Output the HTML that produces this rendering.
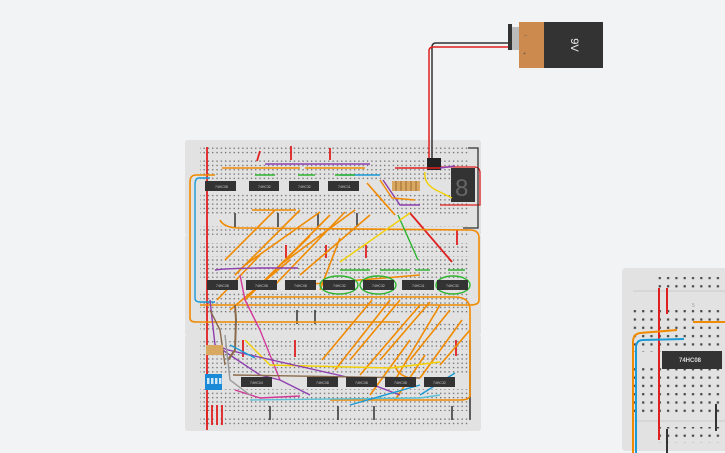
<!DOCTYPE html>
<html><head><meta charset="utf-8"><style>
html,body{margin:0;padding:0;background:#f2f3f5;width:725px;height:453px;overflow:hidden}
svg{display:block}
text{font-family:"Liberation Sans",sans-serif}
</style></head><body>
<svg width="725" height="453" viewBox="0 0 725 453">
<defs>
<pattern id="h" width="4.3" height="4.3" patternUnits="userSpaceOnUse"><rect x="1.4" y="1.4" width="1.3" height="1.3" fill="#555"/></pattern>
<pattern id="h2" width="8.3" height="8.3" patternUnits="userSpaceOnUse"><rect x="3" y="3" width="2.2" height="2.2" fill="#444"/></pattern>
</defs>
<rect width="725" height="453" fill="#f2f3f5"/>
<!-- main breadboards -->
<rect x="185" y="140" width="296" height="96" rx="3" fill="#e2e2e2"/>
<rect x="185" y="236" width="296" height="98" fill="#e2e2e2"/>
<rect x="185" y="334" width="296" height="97" rx="3" fill="#e2e2e2"/>
<g fill="url(#h)" opacity=".85">
<rect x="200" y="147" width="270" height="9"/>
<rect x="200" y="159" width="270" height="21"/>
<rect x="200" y="193" width="270" height="21"/>
<rect x="200" y="226" width="270" height="9"/>
<rect x="200" y="243" width="270" height="9"/>
<rect x="200" y="256" width="270" height="22"/>
<rect x="200" y="292" width="270" height="22"/>
<rect x="200" y="322" width="270" height="9"/>
<rect x="200" y="341" width="270" height="9"/>
<rect x="200" y="353" width="270" height="22"/>
<rect x="200" y="389" width="270" height="22"/>
<rect x="200" y="418" width="270" height="9"/>
</g>
<!-- right board -->
<rect x="622" y="268" width="110" height="183" rx="4" fill="#e2e2e2"/>
<g fill="url(#h2)">
<rect x="655" y="277" width="70" height="16"/>
<rect x="632" y="310" width="95" height="42"/>
<rect x="632" y="365" width="95" height="50"/>
<rect x="655" y="427" width="70" height="16"/>
</g>
<line x1="633" y1="291" x2="725" y2="291" stroke="#ccc"/>
<line x1="633" y1="421" x2="725" y2="421" stroke="#ccc"/>
<!-- right board wires -->
<line x1="659" y1="288" x2="659" y2="440" stroke="#e02020" stroke-width="2"/>
<line x1="667" y1="288" x2="667" y2="314" stroke="#e02020" stroke-width="2"/>
<path d="M725 322 L693 322" stroke="#f08a00" stroke-width="2" fill="none"/>
<path d="M677 330 L640 333 Q633 334 633 342 L633 453" stroke="#f08a00" stroke-width="2" fill="none"/>
<path d="M684 339 L643 340 Q636 340 636 348 L636 453" stroke="#1a9ad6" stroke-width="2" fill="none"/>
<line x1="667" y1="429" x2="667" y2="453" stroke="#333" stroke-width="2"/>
<line x1="716" y1="404" x2="716" y2="431" stroke="#333" stroke-width="2"/>
<rect x="662" y="351" width="60" height="18" fill="#333"/>
<text x="679" y="362" font-size="6" fill="#ddd" font-weight="bold">74HC08</text>
<text x="692" y="307" font-size="5" fill="#999">5</text>
<!-- battery -->
<rect x="508" y="24" width="4" height="26" fill="#333"/>
<rect x="512" y="27" width="7" height="11" fill="#bbb"/>
<rect x="512" y="38" width="7" height="12" fill="#bbb"/>
<rect x="519" y="22" width="25" height="46" fill="#cc8a4e"/>
<rect x="544" y="22" width="59" height="46" fill="#333"/>
<text x="571" y="45" font-size="11" fill="#eee" transform="rotate(90 571 45)" text-anchor="middle">9V</text>
<text x="524" y="37" font-size="5" fill="#555">–</text>
<text x="523" y="55" font-size="5" fill="#555">+</text>
<path d="M508 43 L436 43 Q432 43 432 47 L432 163" stroke="#333" stroke-width="1.5" fill="none"/>
<path d="M508 47 L433 47 Q429 47 429 51 L429 163" stroke="#e02020" stroke-width="1.5" fill="none"/>
<rect x="427" y="158" width="14" height="12" fill="#222"/>
<!-- 7 seg -->
<rect x="451" y="168" width="24" height="34" fill="#333"/>
<text x="455" y="196" font-size="24" fill="#666" font-family="Liberation Mono">8</text>
<path d="M441 167 L474 167 Q480 167 480 173 L480 205 L440 205" stroke="#e02020" stroke-width="1.3" fill="none"/>
<path d="M468 148 L478 148 L478 228 L463 228" stroke="#333" stroke-width="1.3" fill="none"/>
<!-- rails red/black -->
<g stroke="#e02020" stroke-width="1.8">
<line x1="207" y1="147" x2="207" y2="430"/>
<line x1="260" y1="151" x2="257" y2="161"/><line x1="291" y1="146" x2="291" y2="160"/><line x1="330" y1="148" x2="330" y2="160"/>
<line x1="207" y1="405" x2="207" y2="425"/><line x1="212" y1="405" x2="212" y2="425"/><line x1="217" y1="405" x2="217" y2="425"/><line x1="222" y1="405" x2="222" y2="425"/>
<line x1="295" y1="340" x2="295" y2="357"/><line x1="243" y1="340" x2="243" y2="357"/><line x1="456" y1="340" x2="456" y2="356"/>
<line x1="286" y1="245" x2="286" y2="258"/><line x1="326" y1="245" x2="326" y2="258"/><line x1="366" y1="245" x2="366" y2="258"/><line x1="457" y1="230" x2="457" y2="245"/>
<line x1="410" y1="213" x2="452" y2="262"/>
</g>
<g stroke="#333" stroke-width="1.5">
<line x1="235" y1="213" x2="235" y2="227"/><line x1="278" y1="213" x2="278" y2="227"/><line x1="318" y1="213" x2="318" y2="227"/><line x1="357" y1="213" x2="357" y2="227"/>
<line x1="270" y1="406" x2="270" y2="420"/><line x1="338" y1="406" x2="338" y2="420"/><line x1="374" y1="406" x2="374" y2="420"/><line x1="452" y1="406" x2="452" y2="420"/>
<line x1="470" y1="340" x2="470" y2="420"/><line x1="297" y1="310" x2="297" y2="324"/><line x1="315" y1="310" x2="315" y2="324"/>
</g>
<!-- orange -->
<g stroke="#f08a00" stroke-width="1.6" fill="none">
<path d="M220 220 Q224 228 240 228 L470 230 Q479 230 479 238 L479 300 Q479 305 470 305 L200 305"/>
<path d="M215 175 L196 175 Q190 175 190 182 L190 318 Q190 322 196 322 L400 322"/>
<line x1="222" y1="168" x2="300" y2="168"/><line x1="305" y1="168" x2="365" y2="168"/>
<line x1="252" y1="210" x2="296" y2="210"/>
<path d="M367 183 L395 215"/>
<line x1="225" y1="260" x2="275" y2="210"/><line x1="235" y1="275" x2="300" y2="210"/><line x1="245" y1="265" x2="320" y2="212"/>
<line x1="255" y1="290" x2="330" y2="215"/><line x1="270" y1="290" x2="345" y2="212"/><line x1="280" y1="265" x2="355" y2="210"/>
<line x1="300" y1="275" x2="370" y2="215"/><line x1="320" y1="290" x2="340" y2="238"/><line x1="245" y1="300" x2="310" y2="236"/>
<line x1="230" y1="310" x2="290" y2="260"/><line x1="217" y1="300" x2="260" y2="255"/>
<line x1="322" y1="360" x2="372" y2="300"/><line x1="335" y1="370" x2="390" y2="300"/><line x1="350" y1="360" x2="400" y2="300"/>
<line x1="360" y1="375" x2="420" y2="305"/><line x1="380" y1="360" x2="430" y2="302"/><line x1="395" y1="380" x2="440" y2="305"/>
<line x1="410" y1="360" x2="450" y2="310"/><line x1="420" y1="378" x2="462" y2="320"/><line x1="440" y1="365" x2="470" y2="330"/>
<line x1="370" y1="395" x2="410" y2="340"/><line x1="395" y1="400" x2="425" y2="355"/>
<path d="M250 297 L455 297 Q470 297 470 310 L470 395 Q470 400 460 400 L330 400"/>
<path d="M395 365 Q397 375 410 378"/>
<line x1="300" y1="285" x2="420" y2="275"/>
</g>
<!-- colored wires -->
<g stroke-width="1.4" fill="none">
<line x1="265" y1="164" x2="370" y2="164" stroke="#8e3fb0"/>
<line x1="395" y1="168" x2="440" y2="168" stroke="#e02020"/>
<path d="M383 180 L400 205 L420 205" stroke="#8e3fb0"/>
<path d="M380 180 L392 198 L415 200" stroke="#f08a00"/>
<line x1="440" y1="168" x2="455" y2="166" stroke="#8e3fb0"/>
<path d="M425 172 Q423 185 440 192 L452 198" stroke="#f2d000"/>
<line x1="340" y1="175" x2="380" y2="175" stroke="#1a9ad6"/>
<path d="M210 178 L199 178 Q195 178 195 185 L195 298 Q195 302 200 302 L215 302" stroke="#1a9ad6"/>
<line x1="398" y1="215" x2="418" y2="260" stroke="#2fb52f"/>
<line x1="410" y1="213" x2="340" y2="262" stroke="#f2d000"/>
<line x1="255" y1="175" x2="275" y2="175" stroke="#2fb52f"/><line x1="298" y1="175" x2="315" y2="175" stroke="#2fb52f"/><line x1="335" y1="175" x2="355" y2="175" stroke="#2fb52f"/>
<line x1="340" y1="270" x2="370" y2="270" stroke="#2fb52f"/><line x1="380" y1="270" x2="410" y2="270" stroke="#2fb52f"/><line x1="415" y1="270" x2="430" y2="270" stroke="#2fb52f"/><line x1="448" y1="270" x2="465" y2="270" stroke="#2fb52f"/>
<ellipse cx="339" cy="285" rx="19" ry="9" stroke="#2fb52f"/><ellipse cx="378" cy="285" rx="18" ry="9" stroke="#2fb52f"/><ellipse cx="453" cy="285" rx="17" ry="9" stroke="#2fb52f"/>
<path d="M215 270 Q230 268 260 268 L298 268" stroke="#8e3fb0"/>
<path d="M240 275 L245 300 L260 330 L280 380" stroke="#d23a9a"/>
<path d="M210 300 L215 345 L230 355 L260 375 L280 380 L310 395" stroke="#8e3fb0"/>
<path d="M245 340 L270 365 L390 368 L440 362" stroke="#f2d000"/>
<path d="M250 400 L420 398 L440 395" stroke="#5bc0d6"/>
<path d="M235 390 L260 398 L300 396" stroke="#d23a9a"/>
<path d="M215 345 L228 350 L360 380 L400 395" stroke="#8e3fb0"/>
<path d="M225 365 L220 330 L210 310" stroke="#8a6a4a"/>
<path d="M228 360 L235 350 L236 320 L235 305" stroke="#8a6a4a" stroke-width="2"/>
<path d="M233 375 L420 378" stroke="#8a6a4a"/>
<line x1="350" y1="405" x2="420" y2="385" stroke="#1a9ad6"/>
<line x1="420" y1="395" x2="455" y2="373" stroke="#1a9ad6"/>
<path d="M230 345 L255 358" stroke="#1a9ad6"/>
<path d="M225 335 L230 380 L250 395" stroke="#999"/>
</g>
<!-- resistor banks -->
<rect x="392" y="181" width="28" height="10" fill="#d9a860"/>
<g stroke="#8a5a2a" stroke-width="0.8"><line x1="396" y1="181" x2="396" y2="191"/><line x1="401" y1="181" x2="401" y2="191"/><line x1="406" y1="181" x2="406" y2="191"/><line x1="411" y1="181" x2="411" y2="191"/><line x1="416" y1="181" x2="416" y2="191"/></g>
<rect x="206" y="345" width="17" height="10" fill="#d9a860"/>
<!-- DIP switch -->
<rect x="205" y="374" width="17" height="16" fill="#1a8ad6"/>
<g fill="#cfe8f8"><rect x="207" y="378" width="2.5" height="6"/><rect x="211" y="378" width="2.5" height="6"/><rect x="215" y="378" width="2.5" height="6"/><rect x="219" y="378" width="2.5" height="6"/></g>
<!-- chips -->
<g fill="#333">
<rect x="205" y="181" width="31" height="10"/><rect x="249" y="181" width="30" height="10"/><rect x="289" y="181" width="30" height="10"/><rect x="328" y="181" width="31" height="10"/>
<rect x="207" y="280" width="31" height="10"/><rect x="246" y="280" width="31" height="10"/><rect x="285" y="280" width="31" height="10"/><rect x="323" y="280" width="32" height="10"/><rect x="363" y="280" width="31" height="10"/><rect x="402" y="280" width="32" height="10"/><rect x="437" y="280" width="31" height="10"/>
<rect x="241" y="377" width="31" height="10"/><rect x="307" y="377" width="31" height="10"/><rect x="346" y="377" width="31" height="10"/><rect x="385" y="377" width="31" height="10"/><rect x="424" y="377" width="31" height="10"/>
</g>
<g fill="#ccc" font-size="3.5">
<text x="215" y="188">74HC08</text><text x="258" y="188">74HC32</text><text x="298" y="188">74HC32</text><text x="338" y="188">74HC11</text>
<text x="216" y="287">74HC08</text><text x="255" y="287">74HC08</text><text x="294" y="287">74HC08</text><text x="333" y="287">74HC32</text><text x="372" y="287">74HC32</text><text x="412" y="287">74HC11</text><text x="446" y="287">74HC32</text>
<text x="250" y="384">74HC04</text><text x="316" y="384">74HC08</text><text x="355" y="384">74HC08</text><text x="394" y="384">74HC08</text><text x="433" y="384">74HC32</text>
</g>
</svg>
</body></html>
